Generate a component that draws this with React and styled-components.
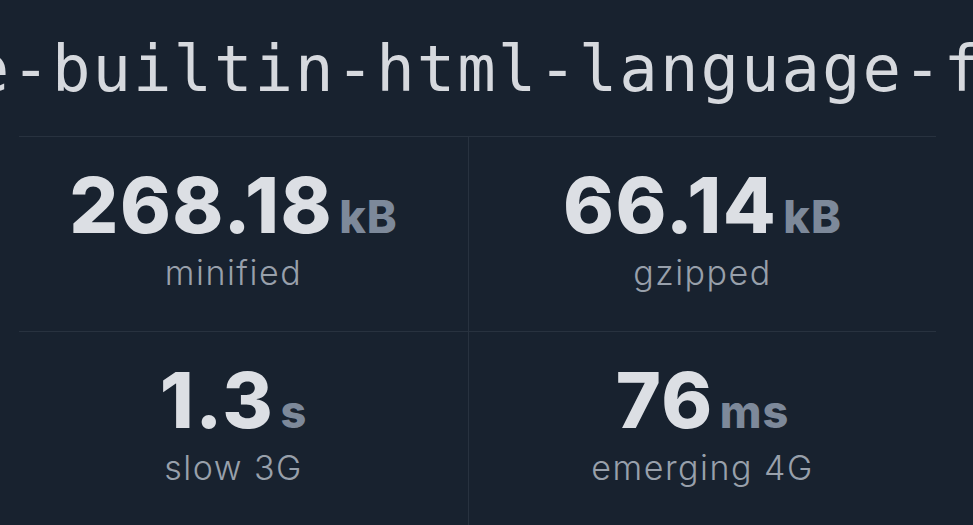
import React from "react";
import styled, { createGlobalStyle } from "styled-components";

const GlobalStyle = createGlobalStyle`
  html, body {
    margin: 0;
    padding: 0;
    background: #18222f;
    overflow: hidden;
  }
`;

const Page = styled.div`
  width: 973px;
  height: 525px;
  overflow: hidden;
  background: #18222f;
`;

const TitleRow = styled.div`
  width: 955px;
  height: 136px;
  display: flex;
  justify-content: center;
  padding-top: 32px;
  box-sizing: border-box;
`;

const PackageName = styled.h1`
  margin: 0;
  flex-shrink: 0;
  white-space: nowrap;
  font-family: "DejaVu Sans Mono", monospace;
  font-weight: 400;
  font-size: 64px;
  letter-spacing: 2px;
  line-height: normal;
  color: #d6d9de;
`;

const StatsGrid = styled.div`
  width: 917px;
  margin-left: 19px;
  display: grid;
  grid-template-columns: 449px 468px;
`;

const StatCell = styled.div`
  height: 195px;
  box-sizing: border-box;
  border-top: 1px solid #28323f;
  border-left: ${(props) => (props.right ? "1px solid #28323f" : "none")};
  padding-right: ${(props) => (props.right ? "0" : "20px")};
  padding-top: 26px;
  display: flex;
  flex-direction: column;
  align-items: center;
`;

const Value = styled.div`
  display: flex;
  align-items: baseline;
  font-family: Inter, "Liberation Sans", sans-serif;
  font-weight: 800;
  line-height: 1.1;
`;

const Number = styled.span`
  font-size: 77px;
  color: #dcdfe4;
  letter-spacing: 1.5px;
`;

const Unit = styled.span`
  font-size: 45px;
  color: #7d899a;
  letter-spacing: 1px;
  margin-left: 6px;
`;

const Label = styled.div`
  font-family: Inter, "Liberation Sans", sans-serif;
  font-weight: 300;
  font-size: 34px;
  letter-spacing: 1.5px;
  color: #98a0ab;
  margin-top: 4px;
`;

const stats = [
  { value: "268.18", unit: "kB", label: "minified" },
  { value: "66.14", unit: "kB", label: "gzipped" },
  { value: "1.3", unit: "s", label: "slow 3G" },
  { value: "76", unit: "ms", label: "emerging 4G" },
];

const App = () => {
  const cells = stats.map((stat, index) => (
    <StatCell key={`stat-${stat.label}`} right={index % 2 === 1}>
      <Value>
        <Number>{stat.value}</Number>
        <Unit>{stat.unit}</Unit>
      </Value>
      <Label>{stat.label}</Label>
    </StatCell>
  ));

  return (
    <Page>
      <GlobalStyle />
      <TitleRow>
        <PackageName>e-builtin-html-language-f</PackageName>
      </TitleRow>
      <StatsGrid>{cells}</StatsGrid>
    </Page>
  );
};

export default App;
